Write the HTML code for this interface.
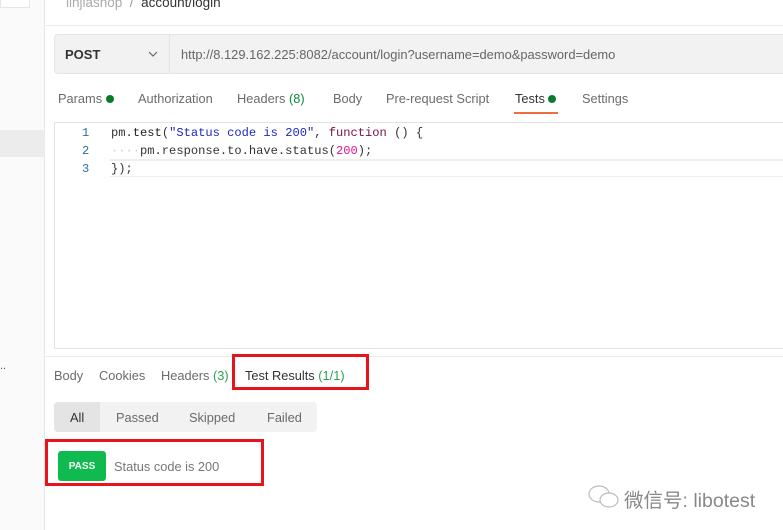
<!DOCTYPE html>
<html><head><meta charset="utf-8"><style>
*{margin:0;padding:0;box-sizing:border-box}
body{width:783px;height:530px;overflow:hidden;background:#fff;font-family:"Liberation Sans",sans-serif;position:relative;color:#6b6b6b}
.a{position:absolute;white-space:nowrap}
.mono{font-family:"Liberation Mono",monospace;font-size:12.1px}
.g{color:#0f8a3a}
.t{font-size:12.8px}
</style></head><body>
<div class="a" style="left:0;top:0;width:45px;height:530px;background:#fafafa;border-right:1px solid #e6e6e6"></div>
<div class="a" style="left:0;top:0;width:30px;height:8px;background:#fff;border:1px solid #e6e6e6;border-top:0"></div>
<div class="a" style="left:0;top:130px;width:45px;height:27px;background:#ececec"></div>
<div class="a" style="left:0;top:360px;font-size:11px;color:#555">..</div>
<div class="a" style="left:66px;top:-5px;font-size:13.5px;color:#aaa">linjiashop <span style="color:#999">&nbsp;/&nbsp;</span> <span style="color:#333">account/login</span></div>
<div class="a" style="left:46px;top:25px;width:737px;height:1px;background:#eaeaea"></div>
<div class="a" style="left:54px;top:34px;width:729px;height:40px;background:#f2f2f2;border:1px solid #e4e4e4;border-right:0;border-radius:4px 0 0 4px"></div>
<div class="a" style="left:169px;top:35px;width:1px;height:38px;background:#e4e4e4"></div>
<div class="a" style="left:65px;top:47px;font-size:13px;color:#333;font-weight:bold">POST</div>
<svg class="a" style="left:148px;top:51px" width="10" height="7"><path d="M1 1l4 4 4-4" fill="none" stroke="#666" stroke-width="1.2"/></svg>
<div class="a" style="left:181px;top:47px;font-size:12.9px;color:#666">http://8.129.162.225:8082/account/login?username=demo&amp;password=demo</div>
<div class="a t" style="left:58px;top:91px">Params <span style="display:inline-block;width:8px;height:8px;border-radius:50%;background:#0b7a2f"></span></div>
<div class="a t" style="left:138px;top:91px">Authorization</div>
<div class="a t" style="left:237px;top:91px">Headers <span class="g">(8)</span></div>
<div class="a t" style="left:333px;top:91px">Body</div>
<div class="a t" style="left:386px;top:91px">Pre-request Script</div>
<div class="a t" style="left:515px;top:91px;color:#333">Tests <span style="display:inline-block;width:8px;height:8px;border-radius:50%;background:#0b7a2f"></span></div>
<div class="a" style="left:514px;top:112px;width:44px;height:2px;background:#f26b3a"></div>
<div class="a t" style="left:582px;top:91px">Settings</div>
<div class="a" style="left:54px;top:122px;width:729px;height:227px;border:1px solid #e2e2e2;border-right:0"></div>
<div class="a" style="left:110px;top:159px;width:673px;height:18px;border-top:2px solid #eee;border-bottom:1px solid #eee"></div>
<div class="a mono" style="left:82px;top:124px;color:#2a6fa0;line-height:18px">1<br>2<br>3</div>
<div class="a mono" style="left:111px;top:124px;line-height:18px;color:#333">pm.<span style="color:#222">test</span>(<span style="color:#1c27c8">"Status code is 200"</span>, <span style="color:#7a0f44">function</span> () {<br><span style="color:#ccc">····</span>pm.response.to.have.status(<span style="color:#e0168a">200</span>);<br>});</div>
<div class="a" style="left:46px;top:356px;width:737px;height:1px;background:#eaeaea"></div>
<div class="a t" style="left:54px;top:368px">Body</div>
<div class="a t" style="left:99px;top:368px">Cookies</div>
<div class="a t" style="left:161px;top:368px">Headers <span style="color:#2aa24d">(3)</span></div>
<div class="a t" style="left:245px;top:368px;color:#333">Test Results <span style="color:#2aa24d">(1/1)</span></div>
<div class="a" style="left:232px;top:354px;width:137px;height:36px;border:3px solid #e8141c"></div>
<div class="a" style="left:54px;top:402px;width:263px;height:30px;background:#f2f2f2;border-radius:4px"></div>
<div class="a" style="left:54px;top:402px;width:46px;height:30px;background:#e4e4e4;border-radius:4px 0 0 4px"></div>
<div class="a t" style="left:70px;top:410px;color:#333">All</div>
<div class="a t" style="left:116px;top:410px">Passed</div>
<div class="a t" style="left:189px;top:410px">Skipped</div>
<div class="a t" style="left:267px;top:410px">Failed</div>
<div class="a" style="left:45px;top:439px;width:219px;height:47px;border:3px solid #e8141c"></div>
<div class="a" style="left:58px;top:451px;width:48px;height:30px;background:#0fba4f;border-radius:3px;color:#fff;font-size:10px;font-weight:bold;text-align:center;line-height:31px">PASS</div>
<div class="a t" style="left:114px;top:459px;color:#777">Status code is 200</div>
<svg class="a" style="left:587px;top:484px" width="34" height="26"><g fill="none" stroke="#bbb" stroke-width="1.2"><ellipse cx="12" cy="10" rx="10" ry="8"/><ellipse cx="22" cy="16" rx="9" ry="7" fill="#fff"/></g></svg>
<div class="a" style="left:624px;top:484px;font-size:19.5px;color:#888;font-family:'Liberation Sans','Noto Sans CJK SC',sans-serif">微信号: libotest</div>
</body></html>
